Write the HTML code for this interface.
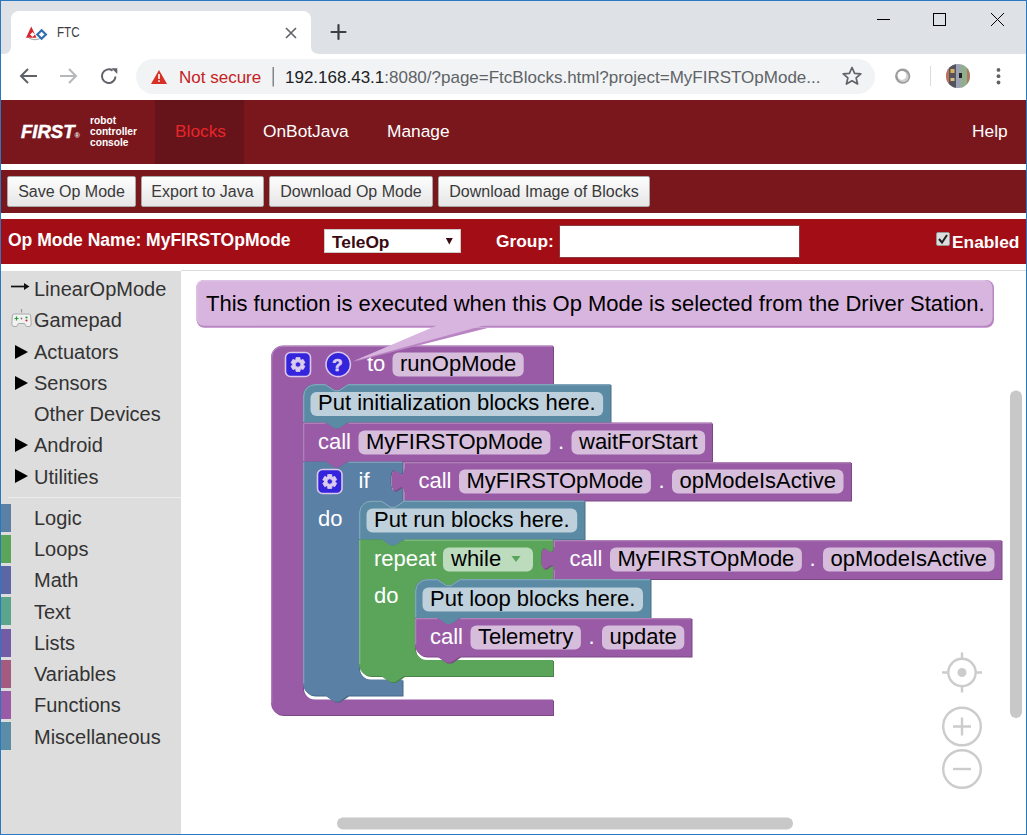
<!DOCTYPE html>
<html><head><meta charset="utf-8">
<style>
*{box-sizing:border-box}
html,body{margin:0;padding:0;width:1027px;height:835px;overflow:hidden;background:#fff;font-family:"Liberation Sans",sans-serif}
.a{position:absolute}
#tabstrip{left:0;top:0;width:1027px;height:54px;background:#dee1e6}
#tab{left:11px;top:11px;width:300px;height:43px;background:#fff;border-radius:8px 8px 0 0}
#toolbar{left:0;top:54px;width:1027px;height:46px;background:#fff}
#omni{left:136px;top:59px;width:739px;height:35px;background:#f1f3f4;border-radius:17.5px}
.t{white-space:nowrap;line-height:1}
#hdr{left:0;top:100px;width:1027px;height:64px;background:#7a171d}
#blockstab{left:155px;top:100px;width:89px;height:64px;background:#66131a}
#btnbar{left:0;top:170px;width:1027px;height:43px;background:#7a171d}
.btn{position:absolute;top:176px;height:31px;border:1px solid #a8a8a8;border-radius:2px;background:linear-gradient(#fdfdfd,#e6e6e6);color:#3a3a3a;font-size:16px;line-height:29px;text-align:center;white-space:nowrap}
#opbar{left:0;top:219px;width:1027px;height:45px;background:#a30d16}
#side{left:1px;top:271px;width:180px;height:564px;background:#dddddd}
.si{position:absolute;left:34px;font-size:20px;color:#333;white-space:nowrap;line-height:1}
.strip{position:absolute;left:1px;width:10px;height:28px}
</style></head><body>
<!-- browser chrome -->
<div class="a" id="tabstrip"></div>
<div class="a" id="tab"></div>
<svg class="a" style="left:0;top:0" width="1027" height="100">
  <!-- tab flare -->
  <path d="M3,54 Q11,54 11,46 L11,54 Z" fill="#fff"/>
  <path d="M311,46 Q311,54 319,54 L311,54 Z" fill="#fff"/>
  <!-- favicon -->
  <path d="M26,37.8 L31.3,26.5 L36.5,37.8 Z" fill="#d9232e"/>
  <path d="M30,34.5 L32.5,32 L35,34.5 L32.5,37 Z" fill="#fff"/>
  <path d="M29,38 Q34,41 40,38.5" fill="none" stroke="#b0b0b0" stroke-width="1.3"/>
  <path d="M37.3,34.5 L41.6,30.2 L45.9,34.5 L41.6,38.8 Z" fill="none" stroke="#2f6db5" stroke-width="2.2"/>
  <!-- close tab -->
  <path d="M286,28 L296,38 M296,28 L286,38" stroke="#5f6368" stroke-width="1.6"/>
  <!-- new tab -->
  <path d="M338.5,25 L338.5,39 M331.5,32 L345.5,32" stroke="#3c4043" stroke-width="2.2" stroke-linecap="round"/>
  <!-- window controls -->
  <path d="M877,19.5 L890,19.5" stroke="#000" stroke-width="1"/>
  <rect x="933.5" y="13.5" width="12" height="12" fill="none" stroke="#000" stroke-width="1"/>
  <path d="M991,13 L1004,26 M1004,13 L991,26" stroke="#000" stroke-width="1"/>
</svg>
<div class="a" id="toolbar"></div>
<div class="a" id="omni"></div>
<svg class="a" style="left:0;top:54px" width="1027" height="46">
  <g transform="translate(0,-54)">
  <path d="M37,76 L21,76 M28,69 L21,76 L28,83" fill="none" stroke="#5f6368" stroke-width="2"/>
  <path d="M60,76 L76,76 M69,69 L76,76 L69,83" fill="none" stroke="#b5b8bb" stroke-width="2"/>
  <path d="M115.5,76.5 A6.8,6.8 0 1 1 112.6,70.6" fill="none" stroke="#5f6368" stroke-width="2"/>
  <path d="M111.5,68.3 L117.3,68.3 L117.3,74.1 Z" fill="#5f6368"/>
  </g>
  <path d="M159,16 L167,30 L151,30 Z" fill="#d93025"/>
  <rect x="158.2" y="20" width="1.6" height="5" fill="#fff"/><rect x="158.2" y="26.3" width="1.6" height="1.6" fill="#fff"/>
  <rect x="272.5" y="13" width="1.5" height="19.5" fill="#80868b"/>
  <path d="M852,13.5 L854.6,19.3 L860.8,19.8 L856.1,23.9 L857.6,30 L852,26.8 L846.4,30 L847.9,23.9 L843.2,19.8 L849.4,19.3 Z" fill="none" stroke="#5f6368" stroke-width="1.7" stroke-linejoin="round"/>
  <circle cx="902.7" cy="22.2" r="7.6" fill="#9c9c9c"/>
  <circle cx="903.2" cy="22.7" r="5.4" fill="#cfcfcf"/>
  <circle cx="901.9" cy="21.4" r="4.4" fill="#fff"/>
  <rect x="930" y="12" width="1" height="20" fill="#dadce0"/>
  <clipPath id="av"><circle cx="958" cy="22" r="12"/></clipPath>
  <g clip-path="url(#av)"><rect x="946" y="10" width="25" height="25" fill="#9aa2b4"/>
  <rect x="946" y="10" width="3" height="25" fill="#c0705a"/><rect x="949" y="10" width="7" height="25" fill="#55545c"/>
  <rect x="950.5" y="15" width="4" height="4" fill="#d8b060"/><rect x="950.5" y="24" width="4" height="3" fill="#d8c080"/>
  <rect x="961" y="10" width="6" height="25" fill="#8fb08a"/><rect x="967" y="10" width="4" height="25" fill="#b07a60"/><rect x="959" y="19" width="3" height="5" fill="#222"/></g>
  <circle cx="998.5" cy="15.9" r="1.9" fill="#5f6368"/><circle cx="998.5" cy="22.2" r="1.9" fill="#5f6368"/><circle cx="998.5" cy="28.5" r="1.9" fill="#5f6368"/>
</svg>
<div class="a t" style="left:56.5px;top:25.3px;font-size:14.7px;color:#3c4043;transform:scaleX(0.79);transform-origin:0 0">FTC</div>
<div class="a t" style="left:179px;top:69px;font-size:17px;color:#c5221f">Not secure</div>
<div class="a t" style="left:285px;top:69px;font-size:17px;color:#202124">192.168.43.1<span style="color:#5f6368">:8080/?page=FtcBlocks.html?project=MyFIRSTOpMode...</span></div>

<!-- header -->
<div class="a" id="hdr"></div>
<div class="a" id="blockstab"></div>
<div class="a t" style="left:21px;top:123px;font-size:18.5px;font-weight:900;font-style:italic;color:#fff;letter-spacing:0px;-webkit-text-stroke:0.5px #fff">FIRST<span style="font-size:7px;-webkit-text-stroke:0">®</span></div>
<div class="a" style="left:90px;top:115px;font-size:10.2px;line-height:11px;font-weight:bold;color:#fff">robot<br>controller<br>console</div>
<div class="a t" style="left:175px;top:122.5px;font-size:17.33px;color:#e8262b">Blocks</div>
<div class="a t" style="left:263px;top:122.5px;font-size:17.33px;color:#fff">OnBotJava</div>
<div class="a t" style="left:387px;top:122.5px;font-size:17.33px;color:#fff">Manage</div>
<div class="a t" style="left:972px;top:122.5px;font-size:17.33px;color:#fff">Help</div>

<div class="a" id="btnbar"></div>
<div class="btn" style="left:7px;width:129px">Save Op Mode</div>
<div class="btn" style="left:141px;width:123px">Export to Java</div>
<div class="btn" style="left:269px;width:164px">Download Op Mode</div>
<div class="btn" style="left:438px;width:212px">Download Image of Blocks</div>

<div class="a" id="opbar"></div>
<div class="a t" style="left:8px;top:232px;font-size:17.5px;font-weight:bold;color:#fff">Op Mode Name: MyFIRSTOpMode</div>
<div class="a" style="left:324px;top:229px;width:137px;height:24px;background:#fff;border:1px solid #ccc"></div>
<div class="a t" style="left:332px;top:233.5px;font-size:17.33px;font-weight:bold;color:#3a0b12">TeleOp</div>
<svg class="a" style="left:445px;top:237px" width="10" height="10"><path d="M0.8,1 L7.8,1 L4.3,7.5 Z" fill="#3a0b12"/></svg>
<div class="a t" style="left:496px;top:233px;font-size:17.33px;font-weight:bold;color:#fff">Group:</div>
<div class="a" style="left:559px;top:225px;width:241px;height:33px;background:#fff;border:1px solid #8d3a3e"></div>
<div class="a" style="left:936px;top:232px;width:14px;height:14px;background:#ddd;border:1px solid #999;border-radius:2px"></div>
<svg class="a" style="left:936px;top:232px" width="14" height="14"><path d="M3,7 L6,10.5 L11,3" fill="none" stroke="#222" stroke-width="2"/></svg>
<div class="a t" style="left:952px;top:233.5px;font-size:17.33px;font-weight:bold;color:#fff">Enabled</div>

<div class="a" style="left:181px;top:270px;width:845px;height:1px;background:#dcdcdc"></div>
<!-- sidebar -->
<div class="a" id="side"></div>
<div class="a" style="left:8px;top:497px;width:173px;height:1px;background:#ececec"></div>
<svg class="a" style="left:0;top:271px" width="181" height="300">
  <path d="M11,15.5 L26,15.5" stroke="#111" stroke-width="1.7"/><path d="M24,12 L29.5,15.5 L24,19 Z" fill="#111"/>
  <path d="M21.5,38 V41.5" stroke="#999" stroke-width="1.2"/>
  <path d="M14,43 Q12.5,43 12.3,45 L11.8,53 Q11.8,55.5 14,55.5 L16.5,55.5 L18.5,52.5 L24.5,52.5 L26.5,55.5 L29,55.5 Q31.2,55.5 31.2,53 L30.7,45 Q30.5,43 29,43 Z" fill="#f2f2f2" stroke="#a8a8a8" stroke-width="1"/>
  <path d="M14.5,47.5 L18.5,47.5 M16.5,45.5 L16.5,49.5" stroke="#2a9a3a" stroke-width="1.2"/>
  <circle cx="26.5" cy="46.5" r="1.1" fill="#2a9a3a"/><circle cx="26.5" cy="49.5" r="1.1" fill="#d03030"/>
  <circle cx="21.5" cy="47.5" r="0.9" fill="#777"/>
  <path d="M15,74 L15,88 L28,81 Z" fill="#000"/>
  <path d="M15,105 L15,119 L28,112 Z" fill="#000"/>
  <path d="M15,167 L15,181 L28,174 Z" fill="#000"/>
  <path d="M15,198 L15,212 L28,205 Z" fill="#000"/>
</svg>
<div class="si" style="top:279px">LinearOpMode</div>
<div class="si" style="top:310px">Gamepad</div>
<div class="si" style="top:342px">Actuators</div>
<div class="si" style="top:373px">Sensors</div>
<div class="si" style="top:404px">Other Devices</div>
<div class="si" style="top:435px">Android</div>
<div class="si" style="top:467px">Utilities</div>

<div class="strip" style="top:504px;background:#5b80a5"></div>
<div class="strip" style="top:535px;background:#5ba55b"></div>
<div class="strip" style="top:566px;background:#5b67a5"></div>
<div class="strip" style="top:597px;background:#5ba58c"></div>
<div class="strip" style="top:629px;background:#745ba5"></div>
<div class="strip" style="top:660px;background:#a55b80"></div>
<div class="strip" style="top:691px;background:#995ba5"></div>
<div class="strip" style="top:722px;background:#5b8da6"></div>
<div class="si" style="top:508px">Logic</div>
<div class="si" style="top:539px">Loops</div>
<div class="si" style="top:570px">Math</div>
<div class="si" style="top:602px">Text</div>
<div class="si" style="top:633px">Lists</div>
<div class="si" style="top:664px">Variables</div>
<div class="si" style="top:695px">Functions</div>
<div class="si" style="top:727px">Miscellaneous</div>

<svg class="a" style="left:181px;top:271px" width="845" height="563" viewBox="181 271 845 563">
<style>.lb{font-family:"Liberation Sans",sans-serif;font-size:22px;fill:#fff}.fd{font-family:"Liberation Sans",sans-serif;font-size:22px;fill:#000}</style>
<path fill="#7a4984" transform="translate(1,1)" d="M271,357.5 A12,12 0 0,1 283,345.5 H553 V384 H348 l-9,6 -4.5,0 -9,-6 H315 A12,12 0 0,0 303,396 V687.5 A12,12 0 0,0 315,699.5 H553 V715 H283 A12,12 0 0,1 271,703 Z"/>
<path fill="#995ba5" d="M271,357.5 A12,12 0 0,1 283,345.5 H553 V384 H348 l-9,6 -4.5,0 -9,-6 H315 A12,12 0 0,0 303,396 V687.5 A12,12 0 0,0 315,699.5 H553 V715 H283 A12,12 0 0,1 271,703 Z"/>
<path fill="none" stroke="#b88cc0" stroke-width="1" d="M271.75,703 V357.5 A11.25,11.25 0 0,1 283,346.25 H552.5"/>
<rect x="285.5" y="352.5" width="25.0" height="24.0" rx="5" fill="#3424dc" stroke="#dcc6ec" stroke-width="1.6"/>
<path transform="translate(298.0,364.5)" d="M-2.16,-4.84 L-1.99,-6.92 L1.99,-6.92 L2.16,-4.84 L3.11,-4.29 L5.00,-5.18 L6.99,-1.74 L5.27,-0.55 L5.27,0.55 L6.99,1.74 L5.00,5.18 L3.11,4.29 L2.16,4.84 L1.99,6.92 L-1.99,6.92 L-2.16,4.84 L-3.11,4.29 L-5.00,5.18 L-6.99,1.74 L-5.27,0.55 L-5.27,-0.55 L-6.99,-1.74 L-5.00,-5.18 L-3.11,-4.29 Z M2.70,0 A2.7,2.7 0 1 0 -2.70,0 A2.7,2.7 0 1 0 2.70,0 Z" fill="#dccdee" stroke="#dccdee" stroke-width="0.8" stroke-linejoin="round" fill-rule="evenodd"/>
<circle cx="338.2" cy="364.4" r="12.2" fill="#3424dc" stroke="#dcc6ec" stroke-width="1.6"/>
<text x="332.3" y="371" style="font-family:'Liberation Sans';font-size:17px;font-weight:bold;fill:#dccdee;stroke:#dccdee;stroke-width:0.7">?</text>
<text class="lb" x="367" y="370.5">to</text>
<rect x="392.5" y="352.5" width="131.2" height="24" rx="6" fill="#d6bddb"/>
<text class="fd" x="400" y="370.5">runOpMode</text>
<path fill="#496e84" transform="translate(1,1)" d="M303,396 A12,12 0 0,1 315,384 H325.5 l9,6 4.5,0 9,-6 H610.5 V422.5 H348 l-9,6 -4.5,0 -9,-6 H303 Z"/>
<path fill="#5b8aa5" d="M303,396 A12,12 0 0,1 315,384 H325.5 l9,6 4.5,0 9,-6 H610.5 V422.5 H348 l-9,6 -4.5,0 -9,-6 H303 Z"/>
<path fill="none" stroke="#8cadc0" stroke-width="1" d="M303.75,422 V396 A11.25,11.25 0 0,1 315,384.75 H325.5 l9,6 4.5,0 9,-6 H610"/>
<rect x="310.5" y="392" width="292.6" height="24" rx="6" fill="#bdd0db"/>
<text class="fd" x="318" y="410">Put initialization blocks here.</text>
<path fill="#7a4984" transform="translate(1,1)" d="M303,422.5 H325.5 l9,6 4.5,0 9,-6 H712 V461.5 H348 l-9,6 -4.5,0 -9,-6 H303 Z"/>
<path fill="#995ba5" d="M303,422.5 H325.5 l9,6 4.5,0 9,-6 H712 V461.5 H348 l-9,6 -4.5,0 -9,-6 H303 Z"/>
<path fill="none" stroke="#b88cc0" stroke-width="1" d="M303.75,461 V423.25 H325.5 M348.5,423.25 H711.5"/>
<text class="lb" x="318" y="448.5">call</text>
<rect x="358.5" y="430.5" width="191.9" height="24" rx="6" fill="#d6bddb"/>
<text class="fd" x="366" y="448.5">MyFIRSTOpMode</text>
<text class="lb" x="558" y="448.5">.</text>
<rect x="571.5" y="430.5" width="133.6" height="24" rx="6" fill="#d6bddb"/>
<text class="fd" x="579" y="448.5">waitForStart</text>
<path fill="#496684" transform="translate(1,1)" d="M303,461.5 H325.5 l9,6 4.5,0 9,-6 H402.5 V469 c0,15 -12,-12 -12,11.25 s12,-3.75 12,11.25 V500.5 H404 l-9,6 -4.5,0 -9,-6 H371 A12,12 0 0,0 359,512.5 V667.5 A12,12 0 0,0 371,679.5 H402.5 V695.5 H348 l-9,6 -4.5,0 -9,-6 H315 A12,12 0 0,1 303,683.5 Z"/>
<path fill="#5b80a5" d="M303,461.5 H325.5 l9,6 4.5,0 9,-6 H402.5 V469 c0,15 -12,-12 -12,11.25 s12,-3.75 12,11.25 V500.5 H404 l-9,6 -4.5,0 -9,-6 H371 A12,12 0 0,0 359,512.5 V667.5 A12,12 0 0,0 371,679.5 H402.5 V695.5 H348 l-9,6 -4.5,0 -9,-6 H315 A12,12 0 0,1 303,683.5 Z"/>
<path fill="none" stroke="#8ca6c0" stroke-width="1" d="M303.75,683.5 V462.25 M348.5,462.25 H402"/>
<rect x="317.5" y="469.5" width="24.5" height="24.0" rx="5" fill="#3424dc" stroke="#dcc6ec" stroke-width="1.6"/>
<path transform="translate(329.75,481.5)" d="M-2.16,-4.84 L-1.99,-6.92 L1.99,-6.92 L2.16,-4.84 L3.11,-4.29 L5.00,-5.18 L6.99,-1.74 L5.27,-0.55 L5.27,0.55 L6.99,1.74 L5.00,5.18 L3.11,4.29 L2.16,4.84 L1.99,6.92 L-1.99,6.92 L-2.16,4.84 L-3.11,4.29 L-5.00,5.18 L-6.99,1.74 L-5.27,0.55 L-5.27,-0.55 L-6.99,-1.74 L-5.00,-5.18 L-3.11,-4.29 Z M2.70,0 A2.7,2.7 0 1 0 -2.70,0 A2.7,2.7 0 1 0 2.70,0 Z" fill="#dccdee" stroke="#dccdee" stroke-width="0.8" stroke-linejoin="round" fill-rule="evenodd"/>
<text class="lb" x="358.5" y="487.5">if</text>
<text class="lb" x="318" y="525.5">do</text>
<path fill="#7a4984" transform="translate(1,1)" d="M403.5,462 H851 V500.5 H403.5 V492 c0,-15 -12,12 -12,-11.25 s12,3.75 12,-11.25 Z"/>
<path fill="#995ba5" d="M403.5,462 H851 V500.5 H403.5 V492 c0,-15 -12,12 -12,-11.25 s12,3.75 12,-11.25 Z"/>
<path fill="none" stroke="#b88cc0" stroke-width="1" d="M404.25,469.5 V462.75 H850.5 M404.25,500 V492"/>
<text class="lb" x="418.5" y="487.5">call</text>
<rect x="459.0" y="469.5" width="191.9" height="24" rx="6" fill="#d6bddb"/>
<text class="fd" x="466.5" y="487.5">MyFIRSTOpMode</text>
<text class="lb" x="658.5" y="487.5">.</text>
<rect x="672.0" y="469.5" width="171.5" height="24" rx="6" fill="#d6bddb"/>
<text class="fd" x="679.5" y="487.5">opModeIsActive</text>
<path fill="#496e84" transform="translate(1,1)" d="M359,512.5 A12,12 0 0,1 371,500.5 H381.5 l9,6 4.5,0 9,-6 H584.5 V539.5 H404 l-9,6 -4.5,0 -9,-6 H359 Z"/>
<path fill="#5b8aa5" d="M359,512.5 A12,12 0 0,1 371,500.5 H381.5 l9,6 4.5,0 9,-6 H584.5 V539.5 H404 l-9,6 -4.5,0 -9,-6 H359 Z"/>
<path fill="none" stroke="#8cadc0" stroke-width="1" d="M359.75,539 V512.5 A11.25,11.25 0 0,1 371,501.25 H381.5 l9,6 4.5,0 9,-6 H584"/>
<rect x="366.5" y="508.5" width="210.7" height="24" rx="6" fill="#bdd0db"/>
<text class="fd" x="374" y="526.5">Put run blocks here.</text>
<path fill="#498449" transform="translate(1,1)" d="M359,539.5 H381.5 l9,6 4.5,0 9,-6 H553 V547 c0,15 -12,-12 -12,11.25 s12,-3.75 12,11.25 V579 H460 l-9,6 -4.5,0 -9,-6 H427 A12,12 0 0,0 415,591 V648 A12,12 0 0,0 427,660 H553 V676 H404 l-9,6 -4.5,0 -9,-6 H371 A12,12 0 0,1 359,664 Z"/>
<path fill="#5ba55b" d="M359,539.5 H381.5 l9,6 4.5,0 9,-6 H553 V547 c0,15 -12,-12 -12,11.25 s12,-3.75 12,11.25 V579 H460 l-9,6 -4.5,0 -9,-6 H427 A12,12 0 0,0 415,591 V648 A12,12 0 0,0 427,660 H553 V676 H404 l-9,6 -4.5,0 -9,-6 H371 A12,12 0 0,1 359,664 Z"/>
<path fill="none" stroke="#8cc08c" stroke-width="1" d="M359.75,664 V540.25 M404.5,540.25 H552.5"/>
<text class="lb" x="374" y="565.5">repeat</text>
<rect x="443" y="547.5" width="90" height="24" rx="6" fill="#bddbbd"/>
<text class="fd" x="451" y="565.5">while</text>
<path d="M511.5,556 L520.5,556 L516,562 Z" fill="#5ba55b"/>
<text class="lb" x="374" y="603">do</text>
<path fill="#7a4984" transform="translate(1,1)" d="M553.5,540 H1001.5 V579 H553.5 V570 c0,-15 -12,12 -12,-11.25 s12,3.75 12,-11.25 Z"/>
<path fill="#995ba5" d="M553.5,540 H1001.5 V579 H553.5 V570 c0,-15 -12,12 -12,-11.25 s12,3.75 12,-11.25 Z"/>
<path fill="none" stroke="#b88cc0" stroke-width="1" d="M554.25,547.5 V540.75 H1001 M554.25,578.5 V570"/>
<text class="lb" x="569.5" y="565.5">call</text>
<rect x="610.0" y="547.5" width="191.9" height="24" rx="6" fill="#d6bddb"/>
<text class="fd" x="617.5" y="565.5">MyFIRSTOpMode</text>
<text class="lb" x="809.5" y="565.5">.</text>
<rect x="823.0" y="547.5" width="171.5" height="24" rx="6" fill="#d6bddb"/>
<text class="fd" x="830.5" y="565.5">opModeIsActive</text>
<path fill="#496e84" transform="translate(1,1)" d="M415,591 A12,12 0 0,1 427,579 H437.5 l9,6 4.5,0 9,-6 H650.5 V618 H460 l-9,6 -4.5,0 -9,-6 H415 Z"/>
<path fill="#5b8aa5" d="M415,591 A12,12 0 0,1 427,579 H437.5 l9,6 4.5,0 9,-6 H650.5 V618 H460 l-9,6 -4.5,0 -9,-6 H415 Z"/>
<path fill="none" stroke="#8cadc0" stroke-width="1" d="M415.75,617.5 V591 A11.25,11.25 0 0,1 427,579.75 H437.5 l9,6 4.5,0 9,-6 H650"/>
<rect x="422.5" y="587.5" width="220.5" height="24" rx="6" fill="#bdd0db"/>
<text class="fd" x="430" y="605.5">Put loop blocks here.</text>
<path fill="#7a4984" transform="translate(1,1)" d="M415,618 H437.5 l9,6 4.5,0 9,-6 H691.5 V656.5 H460 l-9,6 -4.5,0 -9,-6 H427 A12,12 0 0,1 415,644.5 Z"/>
<path fill="#995ba5" d="M415,618 H437.5 l9,6 4.5,0 9,-6 H691.5 V656.5 H460 l-9,6 -4.5,0 -9,-6 H427 A12,12 0 0,1 415,644.5 Z"/>
<path fill="none" stroke="#b88cc0" stroke-width="1" d="M415.75,644.5 V618.75 H437.5 M460.5,618.75 H691"/>
<text class="lb" x="430" y="643.5">call</text>
<rect x="470.5" y="625.5" width="110.4" height="24" rx="6" fill="#d6bddb"/>
<text class="fd" x="478" y="643.5">Telemetry</text>
<text class="lb" x="588.5" y="643.5">.</text>
<rect x="602.0" y="625.5" width="82.3" height="24" rx="6" fill="#d6bddb"/>
<text class="fd" x="609.5" y="643.5">update</text>
<path fill="#b985c3" d="M353,362 L439,328 L487.5,328 Z"/>
<rect x="196.5" y="280" width="797.5" height="47.8" rx="8" fill="#b985c3"/>
<rect x="196" y="280" width="796.5" height="45.8" rx="8" fill="#d8b5df"/>
<path fill="none" stroke="#e2c8e8" stroke-width="1" d="M196.8,319 V288 A7.2,7.2 0 0 1 204,280.8 H985"/>
<path fill="#d8b5df" d="M353,361.3 L438,325 L485.5,325 Z"/>
<text x="206" y="311" style="font-family:'Liberation Sans';font-size:22px;fill:#000;letter-spacing:-0.02px">This function is executed when this Op Mode is selected from the Driver Station.</text>
<g fill="none" stroke="#cccccc" stroke-width="2.4">
<circle cx="962" cy="672.5" r="13.7"/>
<path d="M962,652.5 V658 M962,687 V692.5 M942,672.5 H947.5 M976.5,672.5 H982"/>
<circle cx="962" cy="726.5" r="18.8"/>
<path d="M953,726.5 H971 M962,717.5 V735.5"/>
<circle cx="962" cy="769" r="18.8"/>
<path d="M953,769 H971"/>
</g>
<circle cx="962" cy="672.5" r="4.5" fill="#cccccc"/>
<rect x="1010" y="390.5" width="12" height="327.5" rx="6" fill="#c8c8c8"/>
<rect x="337" y="817.5" width="456" height="12" rx="6" fill="#c8c8c8"/>
</svg>


<!-- window border -->
<div class="a" style="left:0;top:0;width:1027px;height:835px;border:1px solid #2b78c2;pointer-events:none"></div>
</body></html>
